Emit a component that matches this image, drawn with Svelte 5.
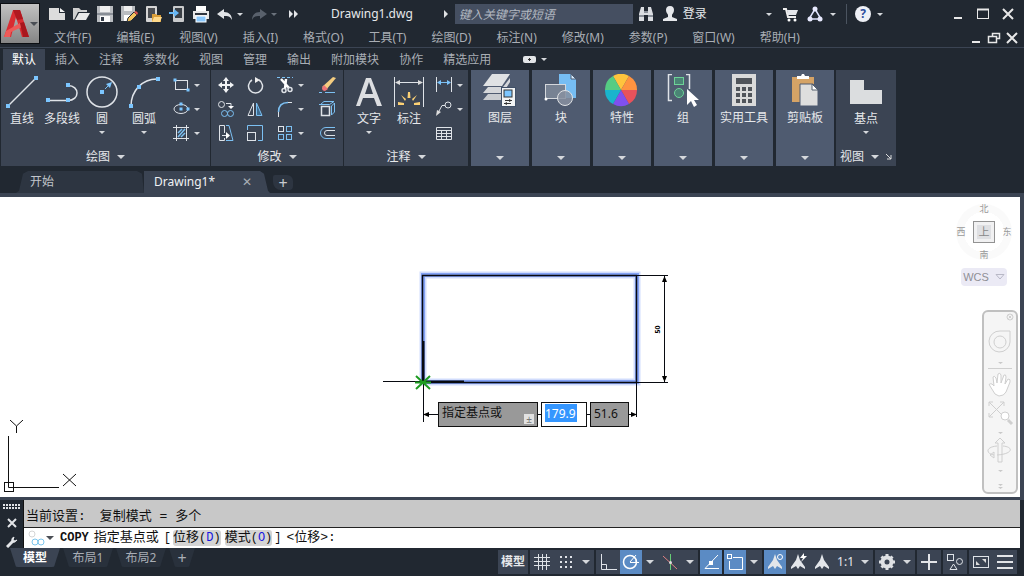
<script lang="ts">
	type Tool = { icon: string; name: string; caret?: boolean };
	type Status = { icon?: string; name: string; text?: string; active?: boolean; caret?: boolean };

	const files: Tool[] = [
		{ icon: 'new', name: '新建' },
		{ icon: 'open', name: '打开' },
		{ icon: 'save', name: '保存' },
		{ icon: 'saveAs', name: '另存为' },
		{ icon: 'openMobile', name: '从移动设备打开' },
		{ icon: 'saveMobile', name: '保存到移动设备' },
		{ icon: 'print', name: '打印' }
	];

	const menus = [
		'文件(F)', '编辑(E)', '视图(V)', '插入(I)', '格式(O)', '工具(T)',
		'绘图(D)', '标注(N)', '修改(M)', '参数(P)', '窗口(W)', '帮助(H)'
	];

	const ribbonTabs = [
		'默认', '插入', '注释', '参数化', '视图', '管理', '输出', '附加模块', '协作', '精选应用'
	];

	const drawLarge: Tool[] = [
		{ icon: 'line', name: '直线' },
		{ icon: 'polyline', name: '多段线' },
		{ icon: 'circle', name: '圆', caret: true },
		{ icon: 'arc', name: '圆弧', caret: true }
	];

	const drawSmall: Tool[] = [
		{ icon: 'rect', name: '矩形', caret: true },
		{ icon: 'ellipse', name: '椭圆', caret: true },
		{ icon: 'hatch', name: '图案填充', caret: true }
	];

	const modify: Tool[] = [
		{ icon: 'move', name: '移动' },
		{ icon: 'rotate', name: '旋转' },
		{ icon: 'trim', name: '修剪', caret: true },
		{ icon: 'erase', name: '删除' },
		{ icon: 'copy', name: '复制' },
		{ icon: 'mirror', name: '镜像' },
		{ icon: 'fillet', name: '圆角', caret: true },
		{ icon: 'explode', name: '分解' },
		{ icon: 'stretch', name: '拉伸' },
		{ icon: 'scale', name: '缩放' },
		{ icon: 'array', name: '阵列', caret: true },
		{ icon: 'offset', name: '偏移' }
	];

	const annoLarge: Tool[] = [
		{ icon: 'text', name: '文字', caret: true },
		{ icon: 'dimension', name: '标注' }
	];

	const annoSmall: Tool[] = [
		{ icon: 'linear', name: '线性', caret: true },
		{ icon: 'leader', name: '引线', caret: true },
		{ icon: 'table', name: '表格' }
	];

	const collapsed: Tool[] = [
		{ icon: 'layers', name: '图层' },
		{ icon: 'block', name: '块' },
		{ icon: 'wheel', name: '特性' },
		{ icon: 'group', name: '组' },
		{ icon: 'calc', name: '实用工具' },
		{ icon: 'clipboard', name: '剪贴板' }
	];

	const statusGroups: Status[][] = [
		[{ name: '模型空间', text: '模型' }],
		[{ icon: 'grid', name: '栅格' }, { icon: 'snap', name: '捕捉', caret: true }],
		[
			{ icon: 'ortho', name: '正交' },
			{ icon: 'polar', name: '极轴', active: true, caret: true },
			{ icon: 'iso', name: '等轴测', caret: true }
		],
		[{ icon: 'track', name: '对象追踪', active: true }],
		[{ icon: 'osnap', name: '对象捕捉', active: true, caret: true }],
		[
			{ icon: 'annoVisible', name: '注释可见性', active: true },
			{ icon: 'annoAuto', name: '自动缩放' },
			{ icon: 'annoScale', name: '注释比例' },
			{ name: '比例', text: '1:1', caret: true }
		],
		[{ icon: 'gear', name: '切换工作空间', caret: true }],
		[{ icon: 'plus', name: '注释监视器' }],
		[{ icon: 'isolate', name: '隔离对象' }],
		[{ icon: 'full', name: '全屏' }, { icon: 'menu', name: '自定义' }]
	];

	const W = 'fill="none" stroke="#dfe3e8"';
	const B = 'fill="none" stroke="#7cc0f2"';
	const dot = (x: number, y: number, s = 4) =>
		`<rect x="${x - s / 2}" y="${y - s / 2}" width="${s}" height="${s}" fill="#7cc6ff"/>`;
	const person = '<path d="M9 1L11 7L16 14L16 16L11 13L9 16L7 13L2 16L2 14L7 7Z" fill="#e3e6ea"/>';

	const icons: Record<string, string> = {
		// title bar, 18 x 18
		new: '<path d="M1 3H11V8H17V15H1Z" fill="#dcdcdc"/><path d="M12 3L17 7H12Z" fill="#f4f4f4"/>',
		open: '<path d="M1 14V3H7L9 5H15V7H6L2 15Z" fill="#cfcfcf"/><path d="M7 8H18L14 15H3Z" fill="#e8e8e8"/>',
		save: '<path d="M1 1H17V17H1Z" fill="#b9bcc0"/><rect x="4" y="1" width="10" height="6" fill="#eee"/><rect x="4" y="11" width="10" height="6" fill="#fafafa"/><rect x="5" y="12" width="3" height="4" fill="#333b47"/><path d="M1 9H17" stroke="#59616d"/>',
		saveAs: '<path d="M1 1H15V9L9 16H1Z" fill="#b9bcc0"/><rect x="4" y="1" width="8" height="5" fill="#eee"/><rect x="4" y="10" width="6" height="6" fill="#fff"/><path d="M7 17L8 13L14 7L17 10L11 16Z" fill="#f3c35e" stroke="#222a33"/><path d="M14 7L16 6L18 8L17 10Z" fill="#e4574f"/>',
		openMobile: '<rect x="2" y="1" width="11" height="16" rx="1" fill="#d5d5d5"/><rect x="4" y="3" width="7" height="10" fill="#4a4d52"/><path d="M8 9H12L13 10H17V17H8Z" fill="#d99d38"/><path d="M10 12H18L16 17H8Z" fill="#ffd98a"/>',
		saveMobile: '<rect x="5" y="1" width="11" height="16" rx="1" fill="#c9cacc"/><rect x="7" y="3" width="7" height="10" fill="#3a3f46"/><path d="M1 7H6V4L11 8L6 12V9H1Z" fill="#67b7f5"/>',
		print: '<rect x="4" y="1" width="10" height="5" fill="#fff"/><rect x="1" y="6" width="16" height="8" fill="#e7e7e7"/><rect x="3" y="8" width="12" height="2" fill="#30363f"/><rect x="4" y="11" width="10" height="6" fill="#8ac7fb" stroke="#fff"/>',
		undo: '<path d="M1 9L8 4V7C13 7 16 10 16 15C14 11 12 11 8 11V14Z" fill="#e2e4e7"/>',
		redo: '<path d="M17 9L10 4V7C5 7 2 10 2 15C4 11 6 11 10 11V14Z" fill="#59616c"/>',
		more: '<path d="M5 5L9 9L5 13Z M10 5L14 9L10 13Z" fill="#e4e6e9"/>',
		find: '<path d="M4 2H7V6H11V2H14L16 9V16H11V10H7V16H2V9Z" fill="#dadde1"/><path d="M2 11H7M11 11H16M7 7H11" stroke="#394350"/>',
		user: '<path d="M9 1C12 1 13 3 13 5C13 8 11 9 11 10V12L16 14V16H2V14L7 12V10C7 9 5 8 5 5C5 3 6 1 9 1Z" fill="#e6e8eb"/>',
		cart: '<path d="M1 4H4L6 12H14" fill="none" stroke="#eee" stroke-width="2"/><path d="M5 5H16L14 10H6Z" fill="#e4e6ea"/><circle cx="7" cy="15" r="1.5" fill="#fff"/><circle cx="13" cy="15" r="1.5" fill="#fff"/>',
		share: '<path d="M9 4L15 14H3Z" fill="none" stroke="#dfe4ff" stroke-width="1.5"/><circle cx="9" cy="4" r="2.5" fill="#e8eaff"/><circle cx="4" cy="14" r="2.5" fill="#e8eaff"/><circle cx="14" cy="14" r="2.5" fill="#e8eaff"/>',
		min: '<path d="M5 13H13" stroke="#e8e8e8" stroke-width="2"/>',
		max: '<rect x="3.5" y="4.5" width="11" height="9" fill="none" stroke="#e8e8e8"/><path d="M3 4.5H15" stroke="#e8e8e8" stroke-width="2"/>',
		close: '<path d="M4 4L14 14M14 4L4 14" stroke="#e8e8e8" stroke-width="2"/>',
		restore: '<path d="M7.5 7V4.5H14.5V9.5H12M3.5 7.5H11.5V13.5H3.5Z" fill="none" stroke="#e8e8e8" stroke-width="1.5"/>',

		// small ribbon tools, 18 x 18
		rect: `<rect x="3.5" y="4.5" width="12" height="9" ${W}/>${dot(3, 4, 3)}${dot(16, 14, 3)}`,
		ellipse: `<ellipse cx="9" cy="9" rx="7" ry="4.5" ${W}/>${dot(9, 9, 3)}${dot(9, 4, 3)}${dot(16, 9, 3)}`,
		hatch: `<path d="M4.5 1V17M14.5 1V17M1 3.5H17M1 14.5H17" ${W}/><path d="M6 9L10 5M6 13L13 5M9 13L13 9" ${B} stroke-width="1.5"/>`,
		move: '<path d="M9 1L12 5H10V8H13V6L17 9L13 12V10H10V13H12L9 17L6 13H8V10H5V12L1 9L5 6V8H8V5H6Z" fill="#f2f4f6"/>',
		rotate: `<path d="M13 4A7 7 0 1 1 6 4" ${W} stroke-width="1.5"/><path d="M9 1L14 4L9 7Z" fill="#eee"/>`,
		trim: `<path d="M1 1.500H17" ${B} stroke-dasharray="3 2"/><path d="M5 3L13 12M10 3L9 13" stroke="#fff" stroke-width="2.5"/><circle cx="8" cy="14.5" r="2" ${W} stroke-width="1.5"/><circle cx="14" cy="13.5" r="2" ${W} stroke-width="1.5"/>`,
		erase: `<path d="M15 1L18 2L8 14L4 11Z" fill="#f5cd80"/><path d="M6 9L10 13L7 15Q4 15 4 12Z" fill="#ee7477"/><path d="M1 16.5H4M7 16.5H17" ${B}/>`,
		copy: `<circle cx="4.5" cy="4.5" r="3" ${W}/><circle cx="7.5" cy="13.5" r="3" ${B}/><circle cx="13.5" cy="13.5" r="3" ${B}/><path d="M9 3.5H14V7" ${W}/><path d="M11 6H17L14 9Z" fill="#fff"/>`,
		mirror: `<path d="M7.5 3V15.5H2Z" ${W}/><path d="M10.5 3V15.5H16Z" fill="#3e6c91" stroke="#7cc0f2"/>`,
		fillet: `<path d="M2.5 17V12M16 2.5H12" ${W}/><path d="M2.5 12C2.5 6 6 2.5 12 2.5" ${B} stroke-width="1.5"/>`,
		explode: `<rect x="3.5" y="6.5" width="8" height="9" ${W} stroke-width="1.5"/><path d="M1 4.5H11.5L16 1.5H6L3 4M13.5 6L16.5 3V12L13.5 15Z" ${B}/>`,
		stretch: `<path d="M7.5 9V1.5H2.5V16.500H7.5V14" ${W}/><path d="M9 1.5H12L16 16.5H9" ${B}/><path d="M5 11.5H10" ${W}/><path d="M9 8L13 11.5L9 15Z" fill="#fff"/>`,
		scale: `<path d="M1.5 6V1.5H16.5V16.5H12" ${B}/><rect x="1.5" y="8.5" width="8" height="8" ${W}/>`,
		array: `<rect x="2.5" y="2.5" width="5" height="5" ${W}/><rect x="10.5" y="2.5" width="5" height="5" ${B}/><rect x="2.5" y="10.5" width="5" height="5" ${B}/><rect x="10.5" y="10.5" width="5" height="5" ${B}/>`,
		offset: `<path d="M17 3.5H8A5.5 5.5 0 0 0 8 14.5H17" ${B}/><path d="M17 6.5H9A2.5 2.5 0 0 0 9 11.5H17" ${W}/>`,
		linear: `<path d="M1.5 1V16M16.5 1V16" ${W}/><path d="M3 6.5H15" ${B}/><path d="M2 6.5L6 4V9Z M16 6.5L12 4V9Z" fill="#7cc6ff"/>`,
		leader: `<circle cx="13" cy="5" r="3" ${W}/><path d="M10 5.5H7L3 13" ${W}/><path d="M1 16L2 10L6 12Z" fill="#ddd"/>`,
		table: `<path d="M1.5 3.5H16.5V15.5H1.5ZM1 6.5H17M1 9.5H17M1 12.5H17M6.5 6V16M11.5 6V16" ${W}/>`,

		// large ribbon tools, 32 x 32
		line: `<path d="M2 30L30 2" ${W} stroke-width="1.5"/>${dot(2, 30)}${dot(30, 2)}`,
		polyline: `<path d="M2 24.5H22M22 9.5C34 9.5 34 24.5 22 24.5" ${W} stroke-width="1.5"/>${dot(2, 24)}${dot(22, 24)}${dot(22, 9)}`,
		circle: `<circle cx="16" cy="16" r="15" ${W} stroke-width="1.5"/>${dot(16, 16)}<path d="M19 13L23 9" ${B}/><path d="M26 6L24 12L20 8Z" fill="#7cc6ff"/>`,
		arc: `<path d="M3 30C3 15 14 3 29 3" ${W} stroke-width="1.5"/>${dot(3, 30)}${dot(11, 11)}${dot(30, 3)}`,
		text: '<path d="M3 30L13 2H18L29 30H24L21 22H10L7 30ZM12 18H20L16 6Z" fill="#dcdee1" fill-rule="evenodd"/>',
		dimension: `<path d="M1.5 1V31M30.5 1V31M3 6.5H29" ${W}/><path d="M2 6.5L7 4V9Z M30 6.5L25 4V9Z" fill="#ddd"/><path d="M15 16H17L17.5 22H14.5Z M8 19L13 23L12 25Z M24 19L19 23L20 25Z M5 26L11 27V29H5Z M27 26L21 27V29H27Z" fill="#fbd074"/>`,
		layers: '<path d="M9 0H27L19 12H0Z" fill="#e0e2e4"/><path d="M5 13H20L27 4V8L20 19H0Z" fill="#d5d7da"/><path d="M5 20H20L23 17V21L18 26H0Z" fill="#c9ccd0"/><rect x="18.5" y="13.5" width="14" height="19" fill="#f2f4f5" stroke="#405067"/><rect x="21" y="16" width="8" height="7" fill="#7cc6ff" stroke="#333"/><path d="M22 26.5H29M21 29.5H28" stroke="#333"/><path d="M26 25L29 26.5L26 28ZM24 28L21 29.5L24 31Z" fill="#333"/>',
		block: '<path d="M15 0H27L32 5V24H15Z" fill="#76bdf3"/><path d="M27 0V5H32Z" fill="#d8eeff" stroke="#4f5b70"/><rect x="1.5" y="10.5" width="20" height="14" fill="#778293" stroke="#d4d7dc"/><circle cx="21" cy="24" r="7.5" fill="#8791a0" fill-opacity=".85" stroke="#e0e2e5"/><circle cx="2" cy="25" r="1.5" fill="#fff"/>',
		wheel: '<path d="M16 16L8 2A16 16 0 0 1 24 2Z" fill="#ffc43d"/><path d="M16 16L24 2A16 16 0 0 1 32 16Z" fill="#ff9340"/><path d="M16 16H32A16 16 0 0 1 24 30Z" fill="#e8525b"/><path d="M16 16L24 30A16 16 0 0 1 8 30Z" fill="#8050ee"/><path d="M16 16L8 30A16 16 0 0 1 0 16Z" fill="#19b5cd"/><path d="M16 16H0A16 16 0 0 1 8 2Z" fill="#55cc83"/>',
		group: `<path d="M6 .5H2.5V26.5H6M20 .5H23.5V15" ${W} stroke-width="1.5"/><rect x="8.5" y="3.5" width="9" height="7" fill="#4a8475" stroke="#6ed398"/><circle cx="13" cy="19" r="4.5" fill="#4a8475" stroke="#6ed398"/><path d="M21 15V31L25 27L28 33L31 31L28 26H33Z" fill="#fff"/>`,
		calc: '<rect x="5" y="0" width="24" height="32" fill="#dadada"/><path d="M9 4H25V10H9Z M9 13H13V17H9ZM15 13H19V17H15ZM21 13H25V17H21ZM9 19H13V23H9ZM15 19H19V23H15ZM21 19H25V23H21ZM9 25H13V29H9ZM15 25H19V29H15ZM21 25H25V29H21Z" fill="#50545a"/>',
		clipboard: '<path d="M4 3H26V28H4Z" fill="#d5a366"/><path d="M9 5V2H13L14 0H16L17 2H21V5Z" fill="#fff"/><path d="M12 10H25L30 16V32H12Z" fill="#dedede" stroke="#4f5b70"/><path d="M24 10V16H30Z" fill="#fff" stroke="#55606f"/>',
		base: '<path d="M0 4H14V14H32V28H0Z" fill="#dbdddf"/>',

		// status bar, 18 x 18
		grid: `<path d="M5.5 1V17M9.5 1V17M13.5 1V17M1 4.5H17M1 8.5H17M1 12.5H17" ${W}/>`,
		snap: '<path d="M3 4H17M3 9H17M3 14H17" fill="none" stroke="#dfe3e8" stroke-width="2" stroke-dasharray="2 3"/>',
		ortho: `<path d="M2.5 1V16.5H18M2.5 11.5H7.5V16" ${W}/>`,
		polar: '<circle cx="8" cy="9" r="6.5" fill="none" stroke="#fff" stroke-width="1.5"/><path d="M8 9.5H17M8 9L14 2M12 4Q15 6 14 10" fill="none" stroke="#fff"/>',
		iso: '<path d="M9.5 1V17" stroke="#65cd75"/><path d="M2 3L16 16" stroke="#e08080"/><circle cx="9.5" cy="9.5" r="1.5" fill="#ddd"/>',
		track: '<path d="M16 2L3 15.5H17" fill="none" stroke="#fff"/><rect x="7" y="8" width="4" height="4" fill="#fff"/>',
		osnap: '<path d="M7 4.5H16.5V16.5H3.5V8" fill="none" stroke="#fff"/><rect x="1.5" y="1.5" width="4" height="4" fill="none" stroke="#fff"/>',
		annoVisible: `${person}<circle cx="14" cy="4" r="2.5" fill="#5b8bc4" stroke="#fff"/>`,
		annoAuto: `${person}<path d="M15 0L11 5H14L12 9L18 3H15Z" fill="#fff"/>`,
		annoScale: person,
		gear: '<circle cx="9" cy="9" r="4.500" fill="none" stroke="#dfe1e4" stroke-width="4"/><path d="M9 1V4M9 14V17M1 9H4M14 9H17M3.500 3.500L5 5M13 13L14.500 14.500M14.500 3.500L13 5M5 13L3.500 14.500" stroke="#dfe1e4" stroke-width="3"/>',
		plus: '<path d="M9 1V17M1 9H17" stroke="#e2e4e7" stroke-width="2"/>',
		isolate: `<rect x="1.5" y="1.5" width="6" height="6" ${W}/><circle cx="13.5" cy="8.5" r="3" ${W}/><path d="M7.5 11L11 16.5H4Z" ${W}/>`,
		full: `<rect x="1.5" y="3.5" width="15" height="11" ${W}/><path d="M10 6H14V10ZM4 8V12H8Z" fill="#ddd"/>`,
		menu: '<path d="M1 3H17M1 9H17M1 15H17" stroke="#e2e4e7" stroke-width="2"/>'
	};

	let x = '179.9';
	let y = '51.6';
	let search = '';
	let command = '';
	let activeTab = '默认';
</script>

{#snippet icon(name: string, size = 18)}
	<svg width={size} height={size} viewBox="0 0 {size} {size}" aria-hidden="true">{@html icons[name]}</svg>
{/snippet}

{#snippet large(tool: Tool)}
	<button class="large">
		{@render icon(tool.icon, 32)}
		<span>{tool.name}</span>
		{#if tool.caret}<i class="caret"></i>{/if}
	</button>
{/snippet}

{#snippet small(tool: Tool)}
	<button class="small" aria-label={tool.name}>
		{@render icon(tool.icon)}
		{#if tool.caret}<i class="caret"></i>{/if}
	</button>
{/snippet}

<div class="app">
	<header>
		<button class="logo" aria-label="应用程序菜单">
			<svg width="26" height="30" viewBox="0 0 26 30" aria-hidden="true">
				<path d="M1 28L10 1H17L26 28H19L13 8L8 28Z" fill="#d92c32" />
				<path d="M10 1H17L20 10L14 11Z" fill="#b01820" />
				<path d="M3 22L17 14L19 18L8 23L7 28H1Z" fill="#ee5a58" />
				<path d="M17 14L21 13L26 28H20Z" fill="#a8171e" />
			</svg>
			<i class="caret wide dark"></i>
		</button>
		<div class="bars">
			<div class="title-bar">
				<div class="quick">
					{#each files as file}
						<button aria-label={file.name}>{@render icon(file.icon)}</button>
					{/each}
					<button aria-label="放弃">{@render icon('undo')}</button>
					<i class="caret"></i>
					<button class="redo" aria-label="重做">{@render icon('redo')}</button>
					<i class="caret dim"></i>
					<button class="more" aria-label="更多">{@render icon('more')}</button>
				</div>
				<h1>Drawing1.dwg</h1>
				<i class="arrow"></i>
				<input class="search" aria-label="搜索" placeholder="键入关键字或短语" bind:value={search} />
				<button aria-label="查找">{@render icon('find')}</button>
				<button class="login">{@render icon('user')}登录</button>
				<div class="account">
					<i class="caret"></i>
					<button aria-label="应用商店">{@render icon('cart')}</button>
					<button aria-label="共享">{@render icon('share')}</button>
					<i class="caret"></i>
					<button class="help" aria-label="帮助"><b>?</b></button>
					<i class="caret"></i>
				</div>
				<div class="window">
					<button aria-label="最小化">{@render icon('min')}</button>
					<button aria-label="最大化">{@render icon('max')}</button>
					<button aria-label="关闭">{@render icon('close')}</button>
				</div>
			</div>
			<nav class="menu-bar">
				{#each menus as menu}
					<button>{menu}</button>
				{/each}
				<div class="window doc">
					<button aria-label="最小化图形">{@render icon('min')}</button>
					<button aria-label="还原图形">{@render icon('restore')}</button>
					<button aria-label="关闭图形">{@render icon('close')}</button>
				</div>
			</nav>
		</div>
	</header>

	<nav class="ribbon-tabs">
		{#each ribbonTabs as tab}
			<button class:active={tab === activeTab} on:click={() => (activeTab = tab)}>{tab}</button>
		{/each}
		<button class="collapse" aria-label="最小化功能区"><span></span><i class="caret"></i></button>
	</nav>

	<div class="ribbon">
		<section class="panel draw">
			<div class="tools">
				{#each drawLarge as tool}{@render large(tool)}{/each}
				<div class="column">
					{#each drawSmall as tool}{@render small(tool)}{/each}
				</div>
			</div>
			<button class="panel-title">绘图<i class="caret wide"></i></button>
		</section>
		<section class="panel modify">
			<div class="tool-grid">
				{#each modify as tool}{@render small(tool)}{/each}
			</div>
			<button class="panel-title">修改<i class="caret wide"></i></button>
		</section>
		<section class="panel annotate">
			<div class="tools">
				{#each annoLarge as tool}{@render large(tool)}{/each}
				<div class="column">
					{#each annoSmall as tool}{@render small(tool)}{/each}
				</div>
			</div>
			<button class="panel-title">注释<i class="caret wide"></i></button>
		</section>
		{#each collapsed as tool}
			<button class="panel collapsed">
				{@render icon(tool.icon, 34)}
				<span>{tool.name}</span>
				<i class="caret wide"></i>
			</button>
		{/each}
		<section class="panel view">
			<div class="tools">{@render large({ icon: 'base', name: '基点', caret: true })}</div>
			<button class="panel-title">
				视图<i class="caret wide"></i>
				<svg width="6" height="6" viewBox="0 0 6 6" aria-hidden="true">
					<path d="M0 0L5 5M5 1V5H1" fill="none" stroke="#ddd" />
				</svg>
			</button>
		</section>
	</div>

	<nav class="file-tabs">
		<button class="file-tab">开始</button>
		<div class="file-tab active">
			<button>Drawing1*</button>
			<button class="close" aria-label="关闭 Drawing1">✕</button>
		</div>
		<button class="file-tab add" aria-label="新图形">+</button>
	</nav>

	<main>
		<svg class="drawing" role="img" aria-label="图形">
			<rect x="423" y="78" width="214" height="107" fill="none" stroke="#7a9cf5" stroke-opacity=".35" stroke-width="7" />
			<rect x="423" y="78" width="214" height="107" fill="none" stroke="#6289f2" stroke-opacity=".7" stroke-width="4" />
			<g fill="none" stroke="#080a10">
				<rect x="422.5" y="78.5" width="214" height="107" stroke-width="1.5" />
				<path d="M637 78.5H668M637 185.5H668M664.5 79V185M636.5 186V220M423 217.5H637" />
				<path d="M383 184.5H464M423.5 144V225" />
				<path d="M423 184.5H464M423.5 144V184" stroke-width="2" />
			</g>
			<path d="M664.5 79L667 85H662ZM664.5 185L667 179H662ZM423 217.5L429 215V220ZM637 217.5L631 215V220Z" />
			<path d="M416 179L430 192M430 179L416 192M415 185.5H431" stroke="#1d9b20" stroke-width="2" />
			<text x="657" y="135" class="measure">50</text>
		</svg>

		<div class="prompt">
			<label class="hint" for="dyn-x">指定基点或<span>±</span></label>
			<div class="field"><input id="dyn-x" class="selected" bind:value={x} /></div>
			<div class="field locked"><input aria-label="Y" bind:value={y} /></div>
		</div>

		<svg class="ucs" width="84" height="76" viewBox="0 0 84 76" aria-hidden="true">
			<g fill="none" stroke="#111">
				<path d="M8.5 16V67.5H59" />
				<rect x="4.5" y="62.5" width="9" height="9" />
				<path d="M10 0L16.5 6L23 0M16.5 6V13M63 54L76 66M76 54L63 66" />
			</g>
		</svg>

		<div class="compass">
			<span class="north">北</span>
			<span class="west">西</span>
			<button>上</button>
			<span class="east">东</span>
			<span class="south">南</span>
		</div>
		<button class="wcs">WCS
			<svg width="10" height="6" viewBox="0 0 10 6" aria-hidden="true">
				<path d="M1 .5H9L5 5Z" fill="none" stroke="#b8b8c6" />
			</svg>
		</button>

		<div class="nav-bar">
			<svg width="32" height="180" viewBox="0 0 32 180" fill="none" stroke="#cfcfcf" aria-hidden="true">
				<circle cx="26" cy="5" r="3" />
				<path d="M24.5 3.5L27.5 6.5M27.5 3.5L24.5 6.5" />
				<path d="M16 19H26V30A10.5 10.5 0 1 1 16 19Z" />
				<circle cx="16" cy="30" r="6" />
				<path d="M4 56.5H28" />
				<path d="M11 82L6 74Q4 71 8 72L10 74L9 65Q10 63 12 66L13 71L14 62Q16 60 17 63V71L20 63Q22 62 22 65L21 72L24 67Q27 67 26 70L22 80Q20 84 15 84Z" fill="#fff" />
				<path d="M5 90L20 105M20 90L5 105M5 94V90H9M16 90H20V94M5 101V105H9" />
				<circle cx="21" cy="104" r="4" fill="#fff" />
				<path d="M24 108L28 112" stroke-width="3" />
				<path d="M14 150V131H11L16 126L21 131H18V150ZM13 134C1 135 2 142 10 143M19 134C30 135 29 142 13 143M10 140L6 143L10 146Z" />
				<path d="M14 50H19L16.5 52ZM14 120H19L16.5 122ZM14 158H19L16.5 160ZM14 172H19L16.5 174ZM14 175H19L16.5 177Z" fill="#c9c9c9" stroke="none" />
			</svg>
		</div>
	</main>

	<div class="command">
		<div class="handle">
			<svg width="18" height="6" viewBox="0 0 18 6" aria-hidden="true">
				<path d="M0 1H18M0 4H18" stroke="#dfe1e4" stroke-width="2" stroke-dasharray="2 1" />
			</svg>
			<button aria-label="关闭命令行">
				<svg width="10" height="10" viewBox="0 0 10 10" aria-hidden="true">
					<path d="M1 1L9 9M9 1L1 9" stroke="#e3e5e8" stroke-width="2" />
				</svg>
			</button>
			<button aria-label="自定义">
				<svg width="12" height="12" viewBox="0 0 12 12" aria-hidden="true">
					<path d="M1 11L7 5" stroke="#e3e5e8" stroke-width="3" />
					<path d="M8 1Q5 2 6 5Q8 8 11 4L9 5L7 4Z" fill="#e3e5e8" stroke="#e3e5e8" />
				</svg>
			</button>
		</div>
		<div class="lines">
			<p class="history"><span>当前设置:</span><span>复制模式 = 多个</span></p>
			<div class="entry">
				<button class="recent" aria-label="最近使用的命令">
					<svg width="17" height="16" viewBox="0 0 17 16" fill="none" aria-hidden="true">
						<circle cx="4" cy="4" r="3" stroke="#d5d5d5" />
						<circle cx="7" cy="12" r="3" stroke="#7cc6ee" />
						<circle cx="13" cy="12" r="3" stroke="#7cc6ee" />
					</svg>
					<i class="caret wide dark"></i>
				</button>
				<label for="cmd"><b>COPY</b><span>指定基点或</span>[</label>
				<button class="option"><span>位移</span>(<em>D</em>)</button>
				<button class="option"><span>模式</span>(<em>O</em>)</button>
				<label for="cmd">]<span>&lt;位移&gt;:</span></label>
				<input id="cmd" bind:value={command} />
			</div>
		</div>
	</div>

	<footer>
		<nav class="layouts">
			<button class="active">模型</button>
			<button>布局1</button>
			<button>布局2</button>
			<button class="add" aria-label="新布局">+</button>
		</nav>
		<div class="status">
			{#each statusGroups as group}
				<div class="group">
					{#each group as item}
						<button class:active={item.active} class:label={item.text} aria-label={item.name}>
							{#if item.icon}{@render icon(item.icon)}{:else}{item.text}{/if}
						</button>
						{#if item.caret}<span class="drop"><i class="caret wide"></i></span>{/if}
					{/each}
				</div>
			{/each}
		</div>
	</footer>
</div>

<style>
	:global(body) {
		margin: 0;
		background: #212831;
	}

	.app {
		display: flex;
		flex-direction: column;
		min-height: 100vh;
		background: #212831;
		color: #e6e8eb;
		font-family: 'Noto Sans', 'Noto Sans CJK SC', sans-serif;
		font-size: 12px;
		line-height: 16px;
	}

	button,
	input {
		margin: 0;
		padding: 0;
		border: 0;
		background: none;
		color: inherit;
		font: inherit;
	}

	button {
		display: flex;
		align-items: center;
		justify-content: center;
		white-space: nowrap;
	}

	svg {
		display: block;
		flex: none;
	}

	.caret {
		flex: none;
		border: 3px solid transparent;
		border-top-color: #d5d8dc;
		border-bottom: 0;
	}

	.caret.wide {
		border-width: 4px;
		border-bottom: 0;
	}

	.caret.dim {
		border-top-color: #6b727c;
	}

	.caret.dark {
		border-top-color: #4a4e55;
	}

	header {
		display: flex;
		border-bottom: 1px solid #3b4453;
	}

	.logo {
		box-sizing: border-box;
		flex: none;
		gap: 1px;
		width: 40px;
		height: 41px;
		margin: 3px 0;
		border: 1px solid #0c0f13;
		background: linear-gradient(#c2c2c2, #858585);
	}

	.bars {
		flex: 1;
		min-width: 0;
	}

	.title-bar {
		display: flex;
		align-items: center;
		height: 28px;
	}

	.quick {
		display: flex;
		align-items: center;
		padding-left: 5px;
	}

	.quick button {
		width: 24px;
	}

	.quick .redo,
	.quick .more {
		margin-left: 4px;
	}

	h1 {
		margin: 0 31px 0 26px;
		font-size: 12px;
		font-weight: 400;
	}

	.arrow {
		border: 4px solid transparent;
		border-left-color: #dfe1e4;
		border-right: 0;
	}

	.search {
		width: 174px;
		height: 20px;
		margin: 0 4px 0 7px;
		padding: 0 0 0 4px;
		background: #454f61;
		font-style: italic;
	}

	.search::placeholder {
		color: #b3b9c2;
		opacity: 1;
	}

	.login {
		gap: 4px;
		margin-left: 6px;
	}

	.account {
		display: flex;
		align-items: center;
		gap: 6px;
		margin-left: auto;
	}

	.account .caret:first-child {
		margin-right: 4px;
	}

	.help {
		height: 20px;
		margin-left: 4px;
		padding-left: 8px;
		border-left: 1px solid #4b5460;
	}

	.help b {
		width: 16px;
		border-radius: 8px;
		background: #eef0f6;
		color: #2b4d9d;
	}

	.window {
		display: flex;
		align-items: center;
		gap: 7px;
		margin-left: 66px;
		padding-right: 7px;
	}

	.menu-bar {
		display: flex;
		align-items: center;
		gap: 25px;
		height: 19px;
		padding-left: 14px;
		color: #a9aeb5;
	}

	.window.doc {
		gap: 0;
		margin-left: auto;
		padding-right: 3px;
	}

	.ribbon-tabs {
		display: flex;
		height: 21px;
		padding: 1px 0 0 3px;
		color: #a9aeb5;
	}

	.ribbon-tabs button {
		padding: 0 10px;
	}

	.ribbon-tabs button.active {
		padding: 0 9px;
		background: #3b4453;
		color: #fff;
	}

	.ribbon-tabs .collapse {
		gap: 5px;
		margin-left: 12px;
	}

	.collapse span {
		width: 13px;
		height: 7px;
		border-radius: 2px;
		background: radial-gradient(#333 0 2px, #e3e5e8 2px);
	}

	.ribbon {
		display: flex;
		gap: 3px;
		height: 96px;
		padding-left: 1px;
	}

	.panel {
		display: flex;
		flex: none;
		flex-direction: column;
		background: #3b4453;
	}

	.draw {
		width: 209px;
		margin-right: -2px;
	}

	.modify {
		width: 132px;
		margin-right: -2px;
	}

	.annotate {
		width: 124px;
	}

	.view {
		width: 60px;
		margin-left: -1px;
	}

	.tools {
		display: flex;
		flex: 1;
	}

	.draw .tools {
		padding-left: 1px;
	}

	.annotate .tools {
		padding-left: 5px;
	}

	.view .tools {
		justify-content: center;
	}

	.large {
		flex-direction: column;
		justify-content: flex-start;
		width: 40px;
		padding-top: 6px;
	}

	.large:nth-child(4) {
		width: 44px;
	}

	.large span {
		margin: 3px 0 4px;
	}

	.column,
	.tool-grid {
		padding-top: 3px;
	}

	.small {
		justify-content: flex-start;
		gap: 4px;
		width: 36px;
		height: 24px;
		padding-left: 6px;
	}

	.tool-grid {
		display: grid;
		flex: 1;
		grid-template-columns: 29px 30px 42px 30px;
		align-content: start;
	}

	.tool-grid .small {
		width: auto;
	}

	.panel-title {
		gap: 7px;
		height: 18px;
	}

	.collapsed {
		width: 58px;
		justify-content: flex-start;
		padding: 4px 0 6px;
		background: #4f5b70;
	}

	.collapsed span {
		margin-top: 2px;
	}

	.collapsed .caret {
		margin-top: auto;
	}

	.file-tabs {
		display: flex;
		height: 22px;
		padding: 5px 0 0 16px;
		border-bottom: 4px solid #3b4453;
	}

	.file-tab {
		width: 114px;
		justify-content: flex-start;
		padding-left: 14px;
		background: #2d3541;
		color: #c1c5cb;
		clip-path: polygon(0 100%, 3px 90%, 7px 12%, 12px 0, calc(100% - 7px) 0, calc(100% - 2px) 12%, 100% 100%);
	}

	button.file-tab {
		box-sizing: border-box;
		width: 128px;
	}

	.file-tab.active {
		display: flex;
		align-items: center;
		justify-content: space-between;
		width: 98px;
		margin-right: 3px;
		padding: 0 18px 0 10px;
		background: #3b4453;
		color: #f0f2f4;
		clip-path: polygon(0 0, calc(100% - 10px) 0, calc(100% - 6px) 12%, calc(100% - 2px) 90%, 100% 100%, 0 100%);
	}

	.file-tab .close {
		color: #a8adb5;
	}

	button.file-tab.add {
		width: 20px;
		height: 15px;
		margin-top: 4px;
		justify-content: center;
		padding: 0;
		border-radius: 2px 6px 4px 8px;
		color: #c7cad0;
		font-size: 16px;
		clip-path: none;
	}

	main {
		position: relative;
		flex: 1;
		min-height: 300px;
		border-right: 4px solid #3b4453;
		border-bottom: 3px solid #3b4453;
		background: #fff;
		color: #111;
		overflow: hidden;
	}

	.drawing {
		position: absolute;
		inset: 0;
		width: 100%;
		height: 100%;
	}

	.measure {
		font-size: 7px;
		font-weight: 700;
		text-anchor: middle;
		transform-box: fill-box;
		transform-origin: center;
		transform: rotate(-90deg);
	}

	.prompt {
		position: absolute;
		top: 205px;
		left: 438px;
		display: flex;
		gap: 3px;
	}

	.hint,
	.field {
		box-sizing: border-box;
		height: 25px;
		border: 1px solid #111;
		background: #999;
	}

	.hint {
		display: flex;
		justify-content: space-between;
		width: 100px;
		padding: 2px 3px;
	}

	.hint span {
		align-self: flex-end;
		width: 10px;
		background: #e2e2e2;
		color: #777;
		font-size: 10px;
		line-height: 10px;
		text-align: center;
	}

	.field {
		width: 46px;
		padding: 1px 3px;
		background: #fff;
	}

	.field.locked {
		width: 39px;
		background: #999;
	}

	.field input {
		width: 32px;
		height: 18px;
	}

	.field .selected {
		background: #3496ff;
		color: #fff;
	}

	.ucs {
		position: absolute;
		bottom: 1px;
		left: 0;
	}

	.compass {
		position: absolute;
		top: 7px;
		right: 8px;
		display: grid;
		grid-template: 10px 24px 10px / 10px 24px 10px;
		gap: 6px;
		place-items: center;
		border-radius: 28px;
		background: radial-gradient(#fff 0 20px, #fafafa 20px 28px);
		color: #999;
		font-size: 9px;
		line-height: 10px;
	}

	.north,
	.south {
		grid-column: 2;
	}

	.west {
		grid-column: 1;
	}

	.compass button {
		width: 22px;
		height: 22px;
		border: 1px solid #929292;
		background: #dfe0e3;
		box-shadow: inset 0 0 0 3px #f1f1f2;
		color: #888;
		font-size: 11px;
	}

	.wcs {
		position: absolute;
		top: 71px;
		right: 13px;
		gap: 6px;
		width: 46px;
		height: 18px;
		border-radius: 4px;
		background: #ebeaf5;
		color: #8f8f96;
		font-family: 'Liberation Sans', sans-serif;
		font-size: 11px;
	}

	.nav-bar {
		position: absolute;
		top: 113px;
		right: 2px;
		border: 2px solid #c0c0c0;
		border-radius: 6px;
		background: #f5f5f5;
	}

	.command {
		display: flex;
		height: 48px;
		color: #111;
	}

	.handle {
		display: flex;
		flex-direction: column;
		align-items: center;
		justify-content: space-between;
		width: 23px;
		padding-top: 4px;
	}

	.lines {
		display: flex;
		flex: 1;
		flex-direction: column;
		margin-right: 4px;
		border-left: 1px solid #111;
		font-family: 'Liberation Mono', 'Noto Sans CJK SC', monospace;
	}

	.lines span {
		font-size: 13px;
	}

	.history {
		display: flex;
		gap: 14px;
		align-items: flex-end;
		box-sizing: border-box;
		height: 28px;
		margin: 0;
		padding: 0 2px 2px;
		border-bottom: 1px solid #222;
		background: #c8c8c8;
	}

	.entry {
		display: flex;
		flex: 1;
		align-items: center;
		gap: 2px;
		padding-left: 4px;
		background: #fff;
	}

	.entry label {
		display: flex;
		gap: 5px;
		white-space: nowrap;
	}

	.recent {
		gap: 1px;
		margin-right: 4px;
	}

	.option {
		border-radius: 3px;
		background: #d4d4d4;
	}

	.option + .option {
		margin-left: 2px;
	}

	.option em {
		color: #1414e0;
		font-style: normal;
	}

	.entry input {
		flex: 1;
		min-width: 0;
		outline: 0;
	}

	footer {
		display: flex;
		justify-content: space-between;
		height: 28px;
	}

	.layouts {
		display: flex;
		gap: 3px;
		padding-left: 10px;
	}

	.layouts button {
		width: 50px;
		height: 19px;
		border-radius: 0 0 8px 8px;
		background: #29313c;
		color: #a9aeb5;
		clip-path: polygon(0 0, 100% 0, calc(100% - 6px) 100%, 6px 100%);
	}

	.layouts button.active {
		background: #3b4453;
		color: #fff;
		font-weight: 700;
	}

	.layouts .add {
		width: 26px;
		font-size: 16px;
	}

	.status {
		display: flex;
		gap: 2px;
		padding: 2px 7px 2px 0;
	}

	.group {
		display: flex;
		background: #3b4453;
	}

	.group button {
		width: 24px;
	}

	.group button.active {
		width: 22px;
		background: #5b8bc4;
	}

	.group .label {
		width: auto;
		padding: 0 3px;
	}

	.group:first-child .label {
		font-weight: 700;
	}

	.drop {
		display: flex;
		align-items: center;
		justify-content: center;
		width: 16px;
	}
</style>
